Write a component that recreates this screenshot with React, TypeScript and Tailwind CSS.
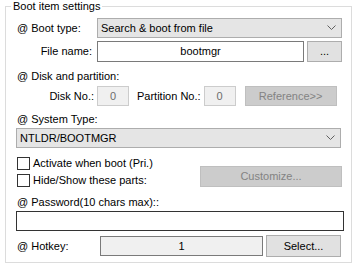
export default function App() {
  return (
    <div className="w-[358px] h-[270px] bg-white pt-[6px] pl-[5px] text-[11px] leading-[13px] text-black" style={{ fontFamily: '"Liberation Sans", Arial, sans-serif' }}>
      <div className="relative w-[347px] h-[257px] border border-[#dcdcdc] pl-[10px] pr-[8px]">
        <div className="absolute left-[5px] top-[-7px] px-[2px] bg-white">Boot item settings</div>

        {/* boot type */}
        <div className="mt-[11px] h-[20px] flex items-center">
          <div className="w-[81px] pl-[1px]">@ Boot type:</div>
          <Combo className="w-[245px]" value="Search & boot from file" />
        </div>

        {/* file name */}
        <div className="mt-[3px] h-[21px] flex items-center">
          <div className="w-[76px] text-right">File name:</div>
          <div className="ml-[5px] w-[207px] h-[21px] border border-[#7a7a7a] bg-white flex items-center justify-center">bootmgr</div>
          <button className="ml-[3px] w-[35px] h-[21px] border border-[#adadad] bg-[#e1e1e1] flex items-center justify-center">...</button>
        </div>

        <div className="mt-[8px] h-[13px] pl-[1px]">@ Disk and partition:</div>

        {/* disk / partition */}
        <div className="mt-[3px] h-[20px] flex items-center">
          <div className="w-[78px] text-right">Disk No.:</div>
          <div className="ml-[3px] w-[32px] h-[20px] border border-[#cccccc] bg-[#f0f0f0] text-[#6d6d6d] flex items-center justify-center">0</div>
          <div className="ml-[8px]">Partition No.:</div>
          <div className="ml-[3px] w-[32px] h-[20px] border border-[#cccccc] bg-[#f0f0f0] text-[#6d6d6d] flex items-center justify-center">0</div>
          <div className="ml-[9px] w-[92px] h-[20px] border border-[#bfbfbf] bg-[#cccccc] text-[#838383] flex items-center justify-center">Reference&gt;&gt;</div>
        </div>

        <div className="mt-[7px] h-[13px] pl-[1px]">@ System Type:</div>
        <div className="mt-[2px] h-[20px] flex">
          <Combo className="w-[325px]" value="NTLDR/BOOTMGR" />
        </div>

        {/* checkboxes */}
        <div className="mt-[9px] h-[30px] flex">
          <div className="flex flex-col gap-[4px] pl-[1px]">
            <label className="flex items-center h-[13px]">
              <span className="w-[13px] h-[13px] border border-[#333333] bg-white" />
              <span className="ml-[3px]">Activate when boot (Pri.)</span>
            </label>
            <label className="flex items-center h-[13px]">
              <span className="w-[13px] h-[13px] border border-[#333333] bg-white" />
              <span className="ml-[3px]">Hide/Show these parts:</span>
            </label>
          </div>
          <div className="ml-auto mr-[1px] self-end w-[142px] h-[21px] border border-[#bfbfbf] bg-[#cccccc] text-[#838383] flex items-center justify-center">Customize...</div>
        </div>

        <div className="mt-[9px] h-[13px] pl-[1px]">@ Password(10 chars max)::</div>
        <div className="mt-[2px] w-[328px] h-[20px] border border-[#333333] bg-white" />

        {/* hotkey */}
        <div className="mt-[4px] h-[22px] flex items-center">
          <div className="w-[84px] pl-[1px]">@ Hotkey:</div>
          <div className="w-[163px] h-[20px] border border-[#7a7a7a] bg-[#f0f0f0] flex items-center justify-center">1</div>
          <button className="ml-[3px] w-[75px] h-[22px] border border-[#adadad] bg-[#e1e1e1] flex items-center justify-center">Select...</button>
        </div>
      </div>
    </div>
  );
}

function Combo({ value, className }: { value: string; className: string }) {
  return (
    <div className={`${className} h-[20px] border border-[#adadad] bg-[#e5e5e5] flex items-center pl-[3px] pr-[5px]`}>
      <span className="flex-1">{value}</span>
      <svg width="9" height="6" viewBox="0 0 9 6" fill="none">
        <path d="M0.5 0.5 L4.5 4.5 L8.5 0.5" stroke="#606060" strokeWidth="1" />
      </svg>
    </div>
  );
}
